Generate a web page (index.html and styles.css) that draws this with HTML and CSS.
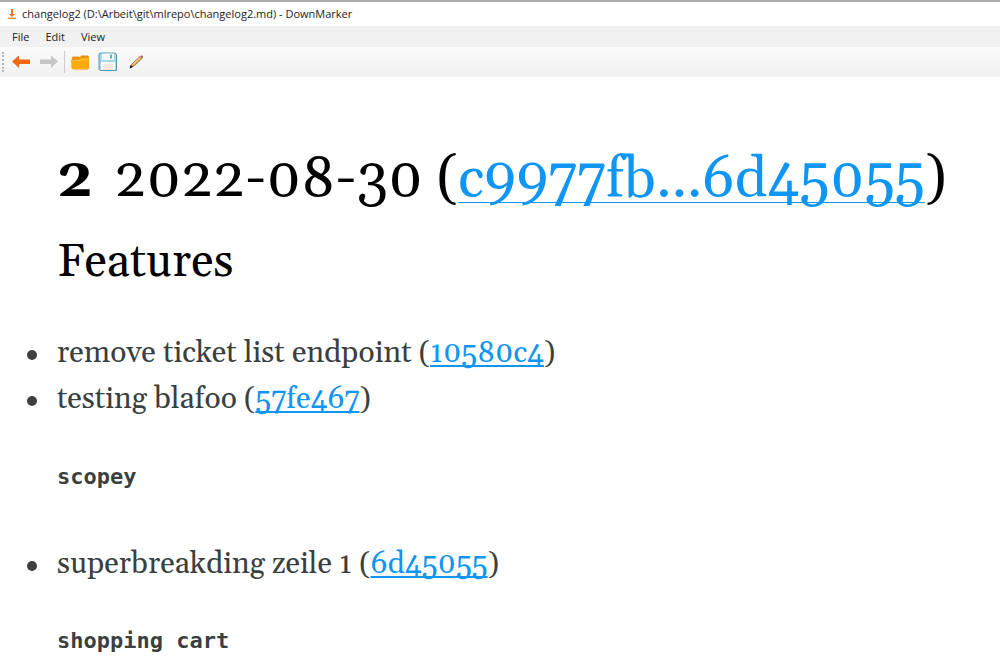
FILE: index.html
```html
<!DOCTYPE html>
<html lang="en">
<head>
    <meta charset="UTF-8"/>
    <title>changelog2 (D:\Arbeit\git\mlrepo\changelog2.md) - DownMarker</title>
    <link rel="stylesheet" href="styles.css">
</head>
<body>

<header class="window-bar">
    <div class="title-bar">
        <svg class="app-icon" viewBox="0 0 10 12" width="10" height="12" aria-hidden="true">
            <path d="M4 1h2v5h2L5 9 2 6h2z" fill="#f07818"/>
            <path d="M1 9.5h8v1.5H1z" fill="#f29a55"/>
        </svg>
        <span>changelog2 (D:\Arbeit\git\mlrepo\changelog2.md) - DownMarker</span>
    </div>

    <nav class="menu-bar">
        <button type="button" class="menu-item">File</button>
        <button type="button" class="menu-item">Edit</button>
        <button type="button" class="menu-item">View</button>
    </nav>

    <div class="toolbar">
        <span class="grip"></span>
        <button type="button" class="tool-btn" aria-label="Back">
            <svg viewBox="0 0 20 20" width="20" height="20">
                <path d="M1 9.5L8 3.500v4h11v4.500H8v4z" fill="#f5680f"/>
            </svg>
        </button>
        <button type="button" class="tool-btn" aria-label="Forward" disabled>
            <svg viewBox="0 0 20 20" width="20" height="20">
                <path d="M19 9.5L12 3.500v4H1v4.500h11v4z" fill="#c6c6c6"/>
            </svg>
        </button>
        <span class="separator"></span>
        <button type="button" class="tool-btn" aria-label="Open">
            <svg viewBox="0 0 20 20" width="20" height="20">
                <path d="M2 5.5l1-1h6l1 1 1-2h7l1 1.500V16l-1 1.500H3L1.500 16z" fill="#e89510"/>
                <path d="M1 8l8-.5 2-1.500h8l-.5 11H2z" fill="#fcab0c"/>
                <path d="M2 9l8-.5 1.500-1H18" fill="none" stroke="#ffc540"/>
            </svg>
        </button>
        <button type="button" class="tool-btn" aria-label="Save">
            <svg viewBox="0 0 20 20" width="20" height="20">
                <path d="M2 1h15l1.500 1.500V18.500H2L1 17.500V2z" fill="#a9d5e6" stroke="#5599b3"/>
                <path d="M4 1.500h12V8H4z" fill="#f3f7f9"/>
                <path d="M12 2.500h2v4h-2z" fill="#69a9c0"/>
                <path d="M3 10h14v8H3z" fill="#fbfbfb"/>
                <path d="M5 12h10v6H5z" fill="#f5e6e3"/>
            </svg>
        </button>
        <button type="button" class="tool-btn" aria-label="Edit document">
            <svg viewBox="0 0 20 20" width="20" height="20">
                <path d="M4.500 15L6 12l8-7.500 2 2L8 14z" fill="#dfb05a" stroke="#6d5530" stroke-width=".7"/>
                <path d="M6.500 12.500L14.500 5.500" stroke="#f8e0a0"/>
                <path d="M14 4.500l1-1h1.500l.5 1v1l-1 1z" fill="#b56c60"/>
                <path d="M3.500 16.500l1-3.500 2.500 2z" fill="#1c1c1c"/>
            </svg>
        </button>
    </div>
</header>

<main class="document">
    <h1><strong>2</strong> 2022-08-30 (<a href="#compare">c9977fb...6d45055</a>)</h1>

    <h2>Features</h2>
    <ul>
        <li>remove ticket list endpoint (<a href="#10580c4">10580c4</a>)</li>
        <li>testing blafoo (<a href="#57fe467">57fe467</a>)</li>
    </ul>

    <h3><code>scopey</code></h3>
    <ul>
        <li>superbreakding zeile 1 (<a href="#6d45055">6d45055</a>)</li>
    </ul>

    <h3><code>shopping cart</code></h3>
</main>

</body>
</html>
```
FILE: styles.css
```css
body {
  margin: 0;
  background: #ffffff;
  color: #3a3f40;
  font-family: Gelasio, Georgia, "Liberation Serif", serif;
  font-size: 30px;
  line-height: 46px;
}

.window-bar {
  border-top: 2px solid #a9aca9;
  font-family: "Open Sans", sans-serif;
  font-size: 11px;
  line-height: 16px;
  color: #222222;
}

.title-bar {
  display: flex;
  align-items: center;
  gap: 5px;
  height: 24px;
  padding: 0 7px;
}

.menu-bar {
  display: flex;
  height: 21px;
  padding: 0 4px;
  background: #f1f1f1;
}

.menu-item {
  padding: 0 8px;
  border: none;
  background: none;
  font: inherit;
  color: inherit;
}

.toolbar {
  display: flex;
  align-items: center;
  height: 30px;
  padding: 0 2px;
  background: linear-gradient(#fbfbfb, #f1f1f1);
}

.grip {
  height: 20px;
  margin-right: 3px;
  border-left: 2px dotted #b4b8bc;
}

.tool-btn {
  display: flex;
  align-items: center;
  justify-content: center;
  width: 28px;
  height: 28px;
  padding: 0;
  border: none;
  background: none;
}

.separator {
  width: 1px;
  height: 22px;
  margin: 0 1px;
  background: #cccccc;
}

.document {
  padding: 64px 24px 0 57px;
}

h1,
h2 {
  margin: 0;
  color: #000000;
  font-weight: 400;
}

h1 {
  font-size: 57px;
  line-height: 76px;
}

h1 strong {
  margin-right: 8px;
}

h2 {
  margin-top: 14px;
  font-size: 46px;
  line-height: 64px;
}

h3 {
  margin: 32px 0;
  font-size: 22px;
  line-height: 46px;
}

code {
  font-family: Consolas, "DejaVu Sans Mono", monospace;
}

ul {
  margin: 35px 0 0;
  padding: 0;
  list-style: none;
}

h3 + ul {
  margin-top: 40px;
}

h3:last-child {
  margin-top: 31px;
}

li::before {
  content: "";
  display: inline-block;
  width: 10px;
  height: 10px;
  margin: 0 20px 2px -30px;
  border-radius: 50%;
  background: #404040;
}

a {
  color: #0f96f5;
  text-decoration-thickness: 2px;
  text-decoration-skip-ink: none;
  text-underline-offset: 3px;
}

h1 a {
  text-decoration-thickness: 1px;
  text-underline-offset: 6px;
}
```
